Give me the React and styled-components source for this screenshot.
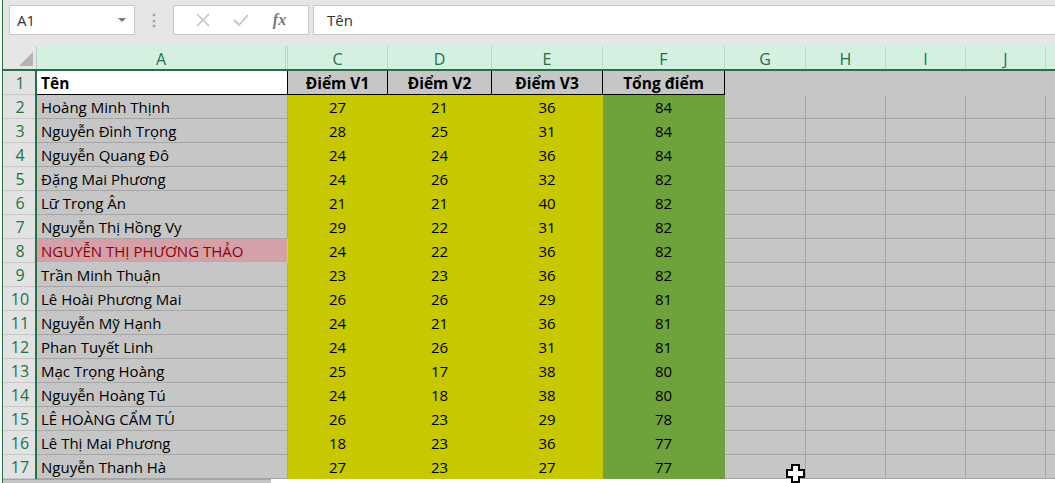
import React from 'react';
import styled, { createGlobalStyle } from 'styled-components';

const GlobalStyle = createGlobalStyle`
  html, body {
    margin: 0;
    padding: 0;
    background: #ffffff;
    overflow: hidden;
  }
`;

const GREEN = '#217346';

const Window = styled.div`
  position: relative;
  width: 1052px;
  height: 483px;
  margin-left: 2px;
  border-left: 1px solid ${GREEN};
  overflow: hidden;
  font-family: 'Open Sans', 'Noto Sans', sans-serif;
  background: #e6e6e6;
`;

const FormulaBar = styled.div`
  height: 46px;
  display: flex;
  align-items: flex-start;
  padding-top: 5px;
  box-sizing: border-box;
  background: #e6e6e6;
`;

const Box = styled.div`
  height: 30px;
  box-sizing: border-box;
  background: #ffffff;
  border: 1px solid #c6c6c6;
  display: flex;
  align-items: center;
`;

const NameBox = styled(Box)`
  width: 126px;
  margin-left: 6px;
  padding: 0 8px 0 7px;
  justify-content: space-between;
  font-size: 15px;
  color: #333;
`;

const Caret = styled.span`
  width: 0;
  height: 0;
  border-left: 4px solid transparent;
  border-right: 4px solid transparent;
  border-top: 4px solid #777;
`;

const Dots = styled.div`
  width: 38px;
  height: 30px;
  display: flex;
  justify-content: center;
  align-items: center;
  color: #a0a0a0;
  font-size: 16px;
  font-weight: bold;
`;

const ButtonBox = styled(Box)`
  width: 136px;
  justify-content: space-around;
  padding: 0 10px;
`;

const FxButton = styled.span`
  font-family: 'Liberation Serif', serif;
  font-style: italic;
  font-weight: bold;
  font-size: 16px;
  color: #777;
`;

const FormulaInput = styled(Box)`
  flex: 1;
  margin-left: 4px;
  padding-left: 13px;
  font-size: 15px;
  color: #333;
  border-right: none;
`;

const Sheet = styled.div`
  display: flex;
  flex-direction: column;
`;

const HeaderRow = styled.div`
  display: flex;
  height: 25px;
  box-sizing: border-box;
  border-bottom: 2px solid ${GREEN};
  background: #d3f0e0;
`;

const Corner = styled.div`
  position: relative;
  width: 34px;
  flex: none;
  background: #e6e6e6;
  border-right: 1px solid #c6c6c6;
  box-sizing: border-box;
  &::after {
    content: '';
    position: absolute;
    right: 3px;
    bottom: 3px;
    border-left: 14px solid transparent;
    border-bottom: 14px solid #b4b4b4;
  }
`;

const ColHead = styled.div`
  width: ${(p) => p.$w}px;
  flex: none;
  box-sizing: border-box;
  border-right: ${(p) => (p.$double ? '3px double #b9d7c6' : '1px solid #bcdac9')};
  display: flex;
  align-items: center;
  justify-content: center;
  font-size: 16px;
  color: ${GREEN};
  padding-top: 2px;
`;

const Row = styled.div`
  display: flex;
  height: 24px;
  background: #c6c6c6;
`;

const RowHead = styled.div`
  width: 32px;
  flex: none;
  box-sizing: border-box;
  background: #e2e2e2;
  border-bottom: 1px solid #c8c8c8;
  display: flex;
  align-items: center;
  justify-content: center;
  font-size: 16px;
  color: ${GREEN};
  padding-left: 2px;
`;

const SelEdge = styled.div`
  width: 2px;
  flex: none;
  background: ${GREEN};
`;

const Cell = styled.div`
  width: ${(p) => p.$w}px;
  flex: none;
  box-sizing: border-box;
  display: flex;
  align-items: center;
  justify-content: ${(p) => (p.$center ? 'center' : 'flex-start')};
  padding: 1px 4px 0;
  font-size: ${(p) => (p.$bold ? 15.5 : 15)}px;
  font-weight: ${(p) => (p.$bold ? 700 : 400)};
  color: ${(p) => p.$color || '#000'};
  background: ${(p) => p.$bg || '#c6c6c6'};
  border-right: 1px solid ${(p) => p.$line || p.$bg || '#a6a6a6'};
  border-bottom: 1px solid ${(p) => p.$hline || p.$line || p.$bg || '#a6a6a6'};
  white-space: nowrap;
  overflow: hidden;
`;

const BottomStrip = styled.div`
  display: flex;
  height: 4px;
  background: #ffffff;
`;

const StripLeft = styled.div`
  width: 268px;
  background: #c6c6c6;
  border-top: 1px solid #a6a6a6;
`;

const Cursor = styled.svg`
  position: absolute;
  left: 782px;
  top: 463px;
`;

const columns = [
  { key: 'A', w: 251, double: true },
  { key: 'C', w: 100 },
  { key: 'D', w: 104 },
  { key: 'E', w: 111 },
  { key: 'F', w: 122 },
  { key: 'G', w: 81 },
  { key: 'H', w: 80 },
  { key: 'I', w: 80 },
  { key: 'J', w: 80 },
  { key: '', w: 80 },
];

const rows = [
  ['Hoàng Minh Thịnh', 27, 21, 36, 84],
  ['Nguyễn Đình Trọng', 28, 25, 31, 84],
  ['Nguyễn Quang Đô', 24, 24, 36, 84],
  ['Đặng Mai Phương', 24, 26, 32, 82],
  ['Lữ Trọng Ân', 21, 21, 40, 82],
  ['Nguyễn Thị Hồng Vy', 29, 22, 31, 82],
  ['NGUYỄN THỊ PHƯƠNG THẢO', 24, 22, 36, 82],
  ['Trần Minh Thuận', 23, 23, 36, 82],
  ['Lê Hoài Phương Mai', 26, 26, 29, 81],
  ['Nguyễn Mỹ Hạnh', 24, 21, 36, 81],
  ['Phan Tuyết Linh', 24, 26, 31, 81],
  ['Mạc Trọng Hoàng', 25, 17, 38, 80],
  ['Nguyễn Hoàng Tú', 24, 18, 38, 80],
  ['LÊ HOÀNG CẨM TÚ', 26, 23, 29, 78],
  ['Lê Thị Mai Phương', 18, 23, 36, 77],
  ['Nguyễn Thanh Hà', 27, 23, 27, 77],
];

const YELLOW = '#c8c800';
const OLIVE = '#6fa23c';
const PINK = '#d4a1a9';

const headers = ['Điểm V1', 'Điểm V2', 'Điểm V3', 'Tổng điểm'];

export default function App() {
  const w = (i) => columns[i].w;
  return (
    <>
      <GlobalStyle />
      <Window>
        <FormulaBar>
          <NameBox>
            A1
            <Caret />
          </NameBox>
          <Dots>⋮</Dots>
          <ButtonBox>
            <svg width="14" height="14" viewBox="0 0 14 14">
              <path d="M1 1 L13 13 M13 1 L1 13" stroke="#c4c4c4" strokeWidth="1.6" fill="none" />
            </svg>
            <svg width="16" height="14" viewBox="0 0 16 14">
              <path d="M1 7 L6 12 L15 2" stroke="#c4c4c4" strokeWidth="1.8" fill="none" />
            </svg>
            <FxButton>fx</FxButton>
          </ButtonBox>
          <FormulaInput>Tên</FormulaInput>
        </FormulaBar>
        <Sheet>
          <HeaderRow>
            <Corner />
            {columns.map((c, i) => (
              <ColHead key={i} $w={c.w} $double={c.double}>
                {c.key}
              </ColHead>
            ))}
          </HeaderRow>
          <Row>
            <RowHead>1</RowHead>
            <SelEdge />
            <Cell $w={w(0)} $bold $bg="#ffffff" $line="#000">
              Tên
            </Cell>
            {headers.map((h, i) => (
              <Cell key={h} $w={w(i + 1)} $bold $center $line="#000">
                {h}
              </Cell>
            ))}
            {columns.slice(5).map((c, i) => (
              <Cell key={i} $w={c.w} $bg="#c6c6c6" />
            ))}
          </Row>
          {rows.map((r, idx) => {
            const pink = idx === 6;
            return (
              <Row key={r[0]}>
                <RowHead>{idx + 2}</RowHead>
                <SelEdge />
                <Cell
                  $w={w(0)}
                  $bg={pink ? PINK : undefined}
                  $color={pink ? '#8e0006' : undefined}
                  $line={pink ? '#c6c6c6' : undefined}
                  $hline={pink ? '#c6c6c6' : undefined}
                >
                  {r[0]}
                </Cell>
                <Cell $w={w(1)} $center $bg={YELLOW}>{r[1]}</Cell>
                <Cell $w={w(2)} $center $bg={YELLOW}>{r[2]}</Cell>
                <Cell $w={w(3)} $center $bg={YELLOW}>{r[3]}</Cell>
                <Cell $w={w(4)} $center $bg={OLIVE}>{r[4]}</Cell>
                {columns.slice(5).map((c, i) => (
                  <Cell key={i} $w={c.w} />
                ))}
              </Row>
            );
          })}
          <BottomStrip>
            <StripLeft />
          </BottomStrip>
        </Sheet>
        <Cursor width="22" height="22" viewBox="0 0 22 22">
          <path
            d="M7 2 H14 V7 H19 V14 H14 V19 H7 V14 H2 V7 H7 Z"
            fill="#ffffff"
            stroke="#000"
            strokeWidth="2"
          />
        </Cursor>
      </Window>
    </>
  );
}
